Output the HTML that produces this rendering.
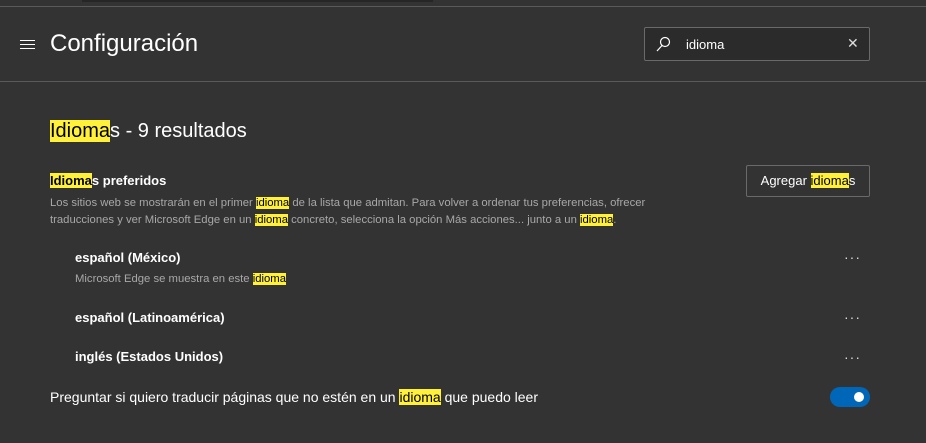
<!DOCTYPE html>
<html><head><meta charset="utf-8"><style>
body{margin:0;width:926px;height:443px;background:#333;font-family:"Liberation Sans",sans-serif;color:#fff;position:relative;overflow:hidden}
.a{position:absolute;white-space:nowrap}
mark{background:#fff03a;color:#000;padding:0}
.d{color:#a8a8a8;font-size:11.3px}
.s{font-size:13px;font-weight:bold}
.dots{position:absolute;left:844px;font-size:14px;color:#ddd;letter-spacing:1px}
</style></head><body>
<div class="a" style="left:82px;top:0;width:351px;height:2px;background:#262626"></div>
<div class="a" style="left:0;top:6px;width:926px;height:1px;background:#5a5a5a"></div>
<div class="a" style="left:0;top:81px;width:926px;height:1px;background:#5a5a5a"></div>
<div class="a" style="left:20px;top:40px;width:15px;height:1px;background:#fff;box-shadow:0 4px 0 #fff,0 8px 0 #fff"></div>
<div class="a" style="left:50px;top:30px;font-size:24px">Configuración</div>
<div class="a" style="left:644px;top:27px;width:224px;height:32px;border:1px solid #6a6a6a;border-radius:2px;background:#2b2b2b"></div>
<svg class="a" style="left:654px;top:35px" width="18" height="18" viewBox="0 0 18 18"><circle cx="11" cy="7" r="4.5" fill="none" stroke="#fff" stroke-width="1.2"/><line x1="8" y1="10.5" x2="3" y2="16" stroke="#fff" stroke-width="1.2"/></svg>
<div class="a" style="left:686px;top:37px;font-size:13px">idioma</div>
<div class="a" style="left:847px;top:35px;font-size:14px;color:#ddd">✕</div>
<div class="a" style="left:50px;top:120px;font-size:20px"><mark>Idioma</mark>s - 9 resultados</div>
<div class="a s" style="left:50px;top:173px"><mark>Idioma</mark>s preferidos</div>
<div class="a d" style="left:50px;top:195px;line-height:17px">Los sitios web se mostrarán en el primer <mark>idioma</mark> de la lista que admitan. Para volver a ordenar tus preferencias, ofrecer<br>traducciones y ver Microsoft Edge en un <mark>idioma</mark> concreto, selecciona la opción Más acciones... junto a un <mark>idioma</mark>.</div>
<div class="a" style="left:746px;top:165px;width:122px;height:30px;border:1px solid #6a6a6a;border-radius:2px;font-size:13px;text-align:center;line-height:30px">Agregar <mark>idioma</mark>s</div>
<div class="a s" style="left:75px;top:250px">español (México)</div>
<div class="a d" style="left:75px;top:273px">Microsoft Edge se muestra en este <mark>idioma</mark></div>
<div class="a s" style="left:75px;top:310px">español (Latinoamérica)</div>
<div class="a s" style="left:75px;top:349px">inglés (Estados Unidos)</div>
<div class="dots" style="top:249px">···</div>
<div class="dots" style="top:309px">···</div>
<div class="dots" style="top:349px">···</div>
<div class="a" style="left:50px;top:389px;font-size:14px">Preguntar si quiero traducir páginas que no estén en un <mark>idioma</mark> que puedo leer</div>
<div class="a" style="left:830px;top:387px;width:40px;height:20px;border-radius:10px;background:#0067b8"></div>
<div class="a" style="left:854px;top:392px;width:10px;height:10px;border-radius:5px;background:#fff"></div>
</body></html>
